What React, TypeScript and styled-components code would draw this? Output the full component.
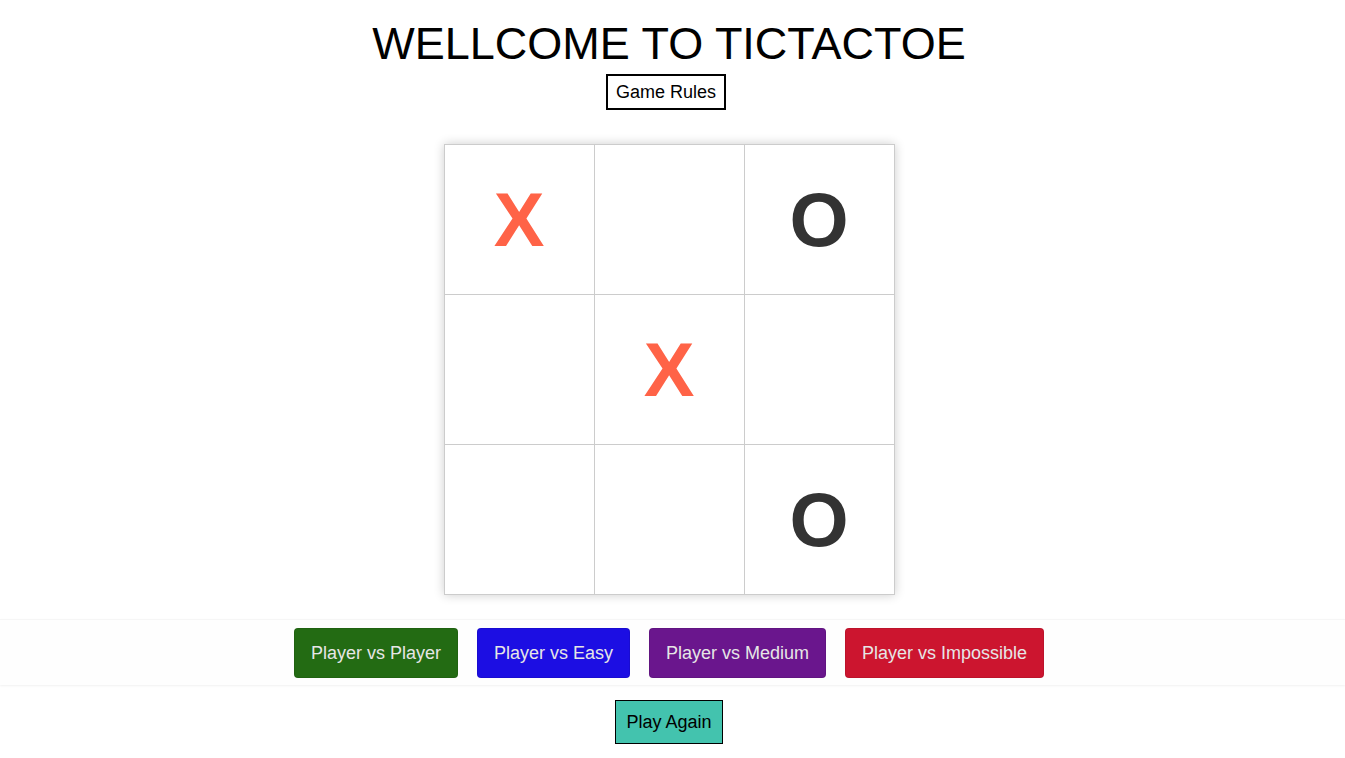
import React from "react";
import styled, { createGlobalStyle } from "styled-components";

const GlobalStyle = createGlobalStyle`
  body {
    margin: 0;
    font-family: "Liberation Sans", Arial, sans-serif;
    background: #fff;
  }
`;

const Page = styled.div`
  display: flex;
  flex-direction: column;
  align-items: center;
  padding-top: 16px;
  padding-right: 7px;
`;

const Title = styled.h1`
  margin: 0;
  font-size: 45px;
  font-weight: 400;
  line-height: 55px;
  color: #000;
`;

const RulesButton = styled.button`
  margin-top: 3px;
  margin-right: 6px;
  height: 36px;
  width: 120px;
  padding: 0;
  border: 2px solid #000;
  background: #fff;
  font-family: inherit;
  font-size: 18px;
  color: #000;
  cursor: pointer;
`;

const Board = styled.div`
  margin-top: 34px;
  display: grid;
  grid-template-columns: repeat(3, 150px);
  grid-template-rows: repeat(3, 150px);
  border-top: 1px solid #ccc;
  border-left: 1px solid #ccc;
  box-shadow: 0 0 10px rgba(0, 0, 0, 0.2);
  background: #fff;
`;

const Cell = styled.div<{ $mark: string }>`
  box-sizing: border-box;
  display: flex;
  align-items: center;
  justify-content: center;
  border-right: 1px solid #ccc;
  border-bottom: 1px solid #ccc;
  font-size: 76px;
  font-weight: 700;
  color: ${(p) => (p.$mark === "X" ? "#ff6347" : "#333")};
  cursor: pointer;
`;

const ModeBar = styled.div`
  margin-top: 24px;
  align-self: stretch;
  margin-right: -7px;
  height: 66px;
  box-sizing: border-box;
  padding: 8px 7px 0 0;
  display: flex;
  justify-content: center;
  align-items: flex-start;
  gap: 19px;
  background: #fefefe;
  border-top: 1px solid #f6f6f6;
  box-shadow: 0 1px 2px rgba(0, 0, 0, 0.06);
`;

const ModeButton = styled.button<{ $bg: string }>`
  height: 50px;
  padding: 0 16px;
  border: 1px solid rgba(0, 0, 0, 0.08);
  border-radius: 4px;
  background: ${(p) => p.$bg};
  color: #e6e6e6;
  font-family: inherit;
  font-size: 18px;
  cursor: pointer;
`;

const PlayAgain = styled.button`
  margin-top: 15px;
  height: 44px;
  padding: 0 10px;
  border: 1px solid #000;
  background: #43c3ae;
  color: #000;
  font-family: inherit;
  font-size: 18px;
  cursor: pointer;
`;

const board = ["X", "", "O", "", "X", "", "", "", "O"];

const modes = [
  { label: "Player vs Player", bg: "#236b13" },
  { label: "Player vs Easy", bg: "#1c0ee3" },
  { label: "Player vs Medium", bg: "#6a168d" },
  { label: "Player vs Impossible", bg: "#cc152f" },
];

const App = () => {
  return (
    <>
      <GlobalStyle />
      <Page>
        <Title>WELLCOME TO TICTACTOE</Title>
        <RulesButton>Game Rules</RulesButton>
        <Board>
          {board.map((mark, i) => (
            <Cell key={i} $mark={mark}>
              {mark}
            </Cell>
          ))}
        </Board>
        <ModeBar>
          {modes.map((m) => (
            <ModeButton key={m.label} $bg={m.bg}>
              {m.label}
            </ModeButton>
          ))}
        </ModeBar>
        <PlayAgain>Play Again</PlayAgain>
      </Page>
    </>
  );
};

export default App;
